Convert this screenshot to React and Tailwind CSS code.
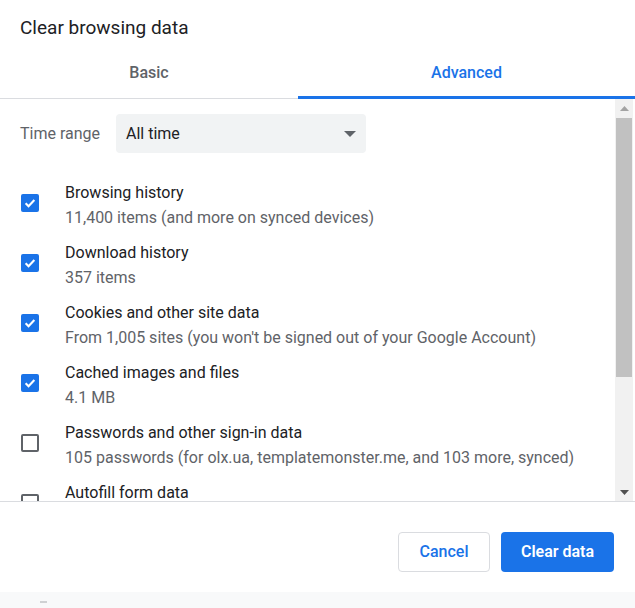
import React from 'react';

const items = [
  { title: 'Browsing history', sub: '11,400 items (and more on synced devices)', checked: true },
  { title: 'Download history', sub: '357 items', checked: true },
  { title: 'Cookies and other site data', sub: "From 1,005 sites (you won't be signed out of your Google Account)", checked: true },
  { title: 'Cached images and files', sub: '4.1 MB', checked: true },
  { title: 'Passwords and other sign-in data', sub: '105 passwords (for olx.ua, templatemonster.me, and 103 more, synced)', checked: false },
  { title: 'Autofill form data', sub: '', checked: false },
];

const CheckBox = ({ checked }) =>
  checked ? (
    <div className="w-[18px] h-[18px] rounded-[2px] bg-[#1a73e8] flex items-center justify-center">
      <svg width="14" height="14" viewBox="0 0 24 24">
        <path d="M4.5 12.5l5 5 10-10.5" fill="none" stroke="#fff" strokeWidth="3.6" />
      </svg>
    </div>
  ) : (
    <div className="w-[18px] h-[18px] rounded-[2px] border-2 border-[#5f6368]" />
  );

const Row = ({ title, sub, checked }) => (
  <div className="flex items-center h-[60px] shrink-0">
    <div className="w-[65px] pl-[21px] shrink-0">
      <CheckBox checked={checked} />
    </div>
    <div className="flex flex-col h-[53px] leading-[25px] pt-[3px]">
      <span className="text-[16px] text-[#202124]">{title}</span>
      <span className="text-[16px] text-[#5f6368]">{sub}</span>
    </div>
  </div>
);

export default function App() {
  return (
    <div className="w-[635px] h-[608px] bg-white flex flex-col overflow-hidden" style={{ fontFamily: 'Roboto, "Liberation Sans", sans-serif' }}>
      {/* Title */}
      <div className="h-[52px] pl-5 pt-[14px] text-[19px] text-[#202124] shrink-0">Clear browsing data</div>

      {/* Tabs */}
      <div className="flex h-[47px] border-b border-[#dadce0] shrink-0">
        <div className="w-[298px] flex items-center justify-center text-[16px] font-medium text-[#5f6368] pb-[4px]">Basic</div>
        <div className="flex-1 flex items-center justify-center text-[16px] font-medium text-[#1a73e8] border-b-[3px] border-[#1a73e8] -mb-px pb-[2px]">Advanced</div>
      </div>

      {/* Scrollable content */}
      <div className="h-[403px] flex border-b border-[#dadce0] shrink-0">
        <div className="flex-1 overflow-hidden flex flex-col pt-[15px]">
          <div className="flex items-center h-[39px] shrink-0 mb-[20px]">
            <span className="pl-5 w-[116px] text-[16px] text-[#5f6368]">Time range</span>
            <div className="w-[250px] h-[39px] rounded bg-[#f1f3f4] flex items-center justify-between pl-[10px] pr-[9px]">
              <span className="text-[16px] text-[#202124]">All time</span>
              <svg width="14" height="8" viewBox="0 0 14 8">
                <path d="M1 1h12L7 7z" fill="#5f6368" />
              </svg>
            </div>
          </div>
          {items.map((it) => (
            <Row key={it.title} {...it} />
          ))}
        </div>
        {/* Scrollbar */}
        <div className="w-[18px] mr-[2px] bg-[#f1f1f1] flex flex-col items-center">
          <div className="h-[19px] flex items-center justify-center">
            <svg width="9" height="5" viewBox="0 0 9 5"><path d="M0 5L4.5 0L9 5z" fill="#a3a3a3" /></svg>
          </div>
          <div className="w-[16px] h-[259px] bg-[#c1c1c1]" />
          <div className="flex-1" />
          <div className="h-[18px] flex items-center justify-center">
            <svg width="9" height="5" viewBox="0 0 9 5"><path d="M0 0h9L4.5 5z" fill="#505050" /></svg>
          </div>
        </div>
      </div>

      {/* Footer buttons */}
      <div className="h-[90px] flex items-start justify-end gap-[11px] pr-[21px] pt-[30px] shrink-0">
        <button className="w-[92px] h-[40px] rounded border border-[#dadce0] bg-white text-[16px] font-medium text-[#1a73e8]">Cancel</button>
        <button className="w-[113px] h-[40px] rounded bg-[#1a73e8] text-[16px] font-semibold text-white">Clear data</button>
      </div>

      {/* Bottom strip */}
      <div className="flex-1 bg-[#f8f9fa] pl-[40px] pt-[9px]">
        <div className="w-[7px] h-[7px] border-t-2 border-[#cfd1d3]" />
      </div>
    </div>
  );
}
